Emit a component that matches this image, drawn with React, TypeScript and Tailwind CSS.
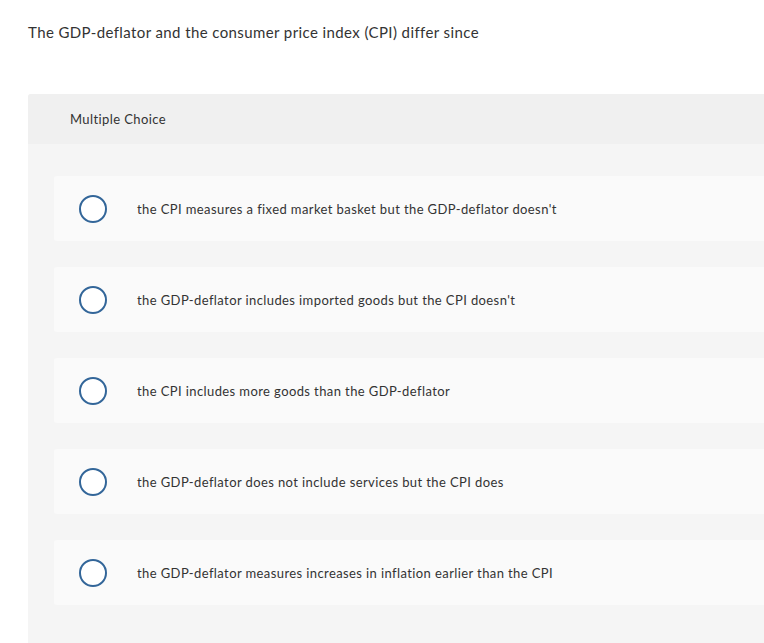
const options = [
  "the CPI measures a fixed market basket but the GDP-deflator doesn't",
  "the GDP-deflator includes imported goods but the CPI doesn't",
  "the CPI includes more goods than the GDP-deflator",
  "the GDP-deflator does not include services but the CPI does",
  "the GDP-deflator measures increases in inflation earlier than the CPI",
];

const App = () => {
  return (
    <div className="w-[764px] h-[643px] overflow-hidden bg-white font-['Lato',sans-serif] tracking-[0.4px] text-[#333]">
      <p className="pl-[28px] pt-[22px] text-[15px] leading-[20px]">
        The GDP-deflator and the consumer price index (CPI) differ since
      </p>

      <div className="ml-[28px] mt-[52px] w-[760px] rounded-tl-[3px] bg-[#f5f5f5] pb-[40px]">
        {/* header */}
        <div className="flex h-[50px] items-center rounded-tl-[3px] bg-[#f0f0f0] pl-[42px]">
          <span className="pt-[2px] text-[13px] text-[#333]">Multiple Choice</span>
        </div>

        {/* options */}
        <div className="flex flex-col gap-[26px] pl-[26px] pt-[32px]">
          {options.map((o) => (
            <div key={o} className="flex h-[65px] items-center rounded-l-[3px] bg-[#fafafa]">
              <span className="ml-[25px] h-[28px] w-[28px] shrink-0 rounded-full border-2 border-[#336699] bg-white" />
              <span className="ml-[30px] pt-[2px] text-[13px] text-[#333]">{o}</span>
            </div>
          ))}
        </div>
      </div>
    </div>
  );
};

export default App;
